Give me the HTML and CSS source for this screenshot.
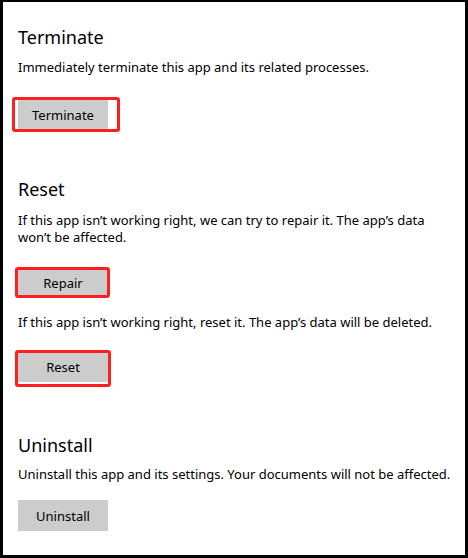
FILE: index.html
```html
<!DOCTYPE html>
<html lang="en">
<head>
<meta charset="utf-8">
<title>App settings</title>
<link rel="stylesheet" href="styles.css">
</head>
<body>
<div class="frame">
  <section class="group group-terminate">
    <h2 class="title">Terminate</h2>
    <p class="desc">Immediately terminate this app and its related processes.</p>
    <div class="action action-terminate">
      <span class="mark mark-terminate"><button class="btn">Terminate</button></span>
    </div>
  </section>

  <section class="group group-reset">
    <h2 class="title">Reset</h2>
    <p class="desc">If this app isn’t working right, we can try to repair it. The app’s data won’t be affected.</p>
    <div class="action action-repair">
      <span class="mark mark-repair"><button class="btn">Repair</button></span>
    </div>
    <p class="desc desc-reset">If this app isn’t working right, reset it. The app’s data will be deleted.</p>
    <div class="action action-reset">
      <span class="mark mark-reset"><button class="btn">Reset</button></span>
    </div>
  </section>

  <section class="group group-uninstall">
    <h2 class="title">Uninstall</h2>
    <p class="desc desc-uninstall">Uninstall this app and its settings. Your documents will not be affected.</p>
    <div class="action action-uninstall">
      <button class="btn">Uninstall</button>
    </div>
  </section>
</div>
</body>
</html>
```

FILE: styles.css
```css
html, body {
  margin: 0;
  padding: 0;
  background: #000;
}

.frame {
  box-sizing: border-box;
  width: 468px;
  height: 558px;
  border-style: solid;
  border-color: #000;
  border-width: 2px 3px 3px 3px;
  background: #fff;
  padding: 0 6px 0 15px;
  font-family: "Noto Sans", "Open Sans", sans-serif;
  color: #000;
  display: flex;
  flex-direction: column;
}

.title {
  margin: 0;
  font-size: 18px;
  line-height: 26px;
  font-weight: 400;
}

.desc {
  margin: 9px 0 0;
  font-size: 13px;
  line-height: 17px;
}

.group-terminate { margin-top: 22px; }
.group-reset { margin-top: 46px; }
.group-reset > .desc:first-of-type { margin-top: 10px; }
.group-uninstall { margin-top: 50px; }
.desc-uninstall { margin-top: 8px; }

.action { display: flex; }
.action-terminate { margin-top: 24px; }
.action-repair { margin-top: 22px; }
.desc-reset { margin-top: 16px; }
.action-reset { margin-top: 21px; }
.action-uninstall { margin-top: 17px; }

.btn {
  width: 90px;
  height: 30px;
  border: 0;
  padding: 0;
  margin: 0;
  background: #cccccc;
  color: #000;
  font-family: "Noto Sans", "Open Sans", sans-serif;
  font-size: 13px;
  display: block;
}

.action-uninstall .btn { height: 31px; }

.mark {
  position: relative;
  display: block;
}

.mark::after {
  content: "";
  position: absolute;
  border: 3px solid #ff1f1f;
  border-radius: 3px;
}

.mark-terminate::after { left: -6px; right: -12px; top: -3px; bottom: -2px; }
.mark-repair::after { left: -3px; right: -2px; top: -1px; bottom: 0; }
.mark-reset::after { left: -3px; right: -3px; top: -2px; bottom: -5px; }
```
